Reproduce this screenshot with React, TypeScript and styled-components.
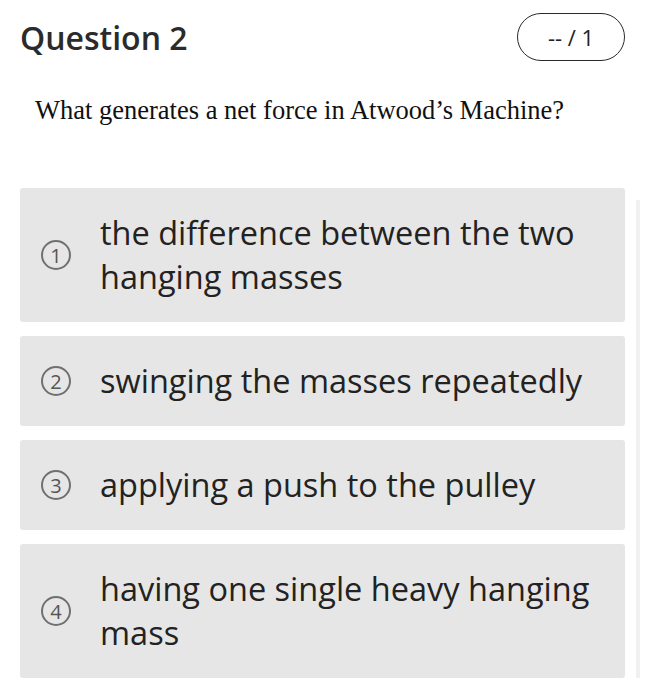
import React from "react";
import styled, { createGlobalStyle } from "styled-components";

const options = [
  "the difference between the two hanging masses",
  "swinging the masses repeatedly",
  "applying a push to the pulley",
  "having one single heavy hanging mass",
];

const GlobalStyle = createGlobalStyle`
  html, body {
    margin: 0;
    padding: 0;
    background: #ffffff;
  }
`;

export default function App() {
  return (
    <>
      <GlobalStyle />
      <Page>
        <Header>
          <Title>Question 2</Title>
          <Score>-- / 1</Score>
        </Header>
        <Prompt>What generates a net force in Atwood’s Machine?</Prompt>
        <Body>
          <OptionList>
            {options.map((text, i) => (
              <Option key={text}>
                <Badge>{i + 1}</Badge>
                <OptionText>{text}</OptionText>
              </Option>
            ))}
          </OptionList>
          <ScrollTrack />
        </Body>
      </Page>
    </>
  );
}

const Page = styled.div`
  width: 645px;
  height: 700px;
  box-sizing: border-box;
  padding: 13px 0 0 20px;
  display: flex;
  flex-direction: column;
  overflow: hidden;
`;

const Header = styled.div`
  display: flex;
  align-items: center;
  justify-content: space-between;
  width: 605px;
`;

const Title = styled.h2`
  margin: 0;
  font-family: "Open Sans", sans-serif;
  font-weight: 600;
  font-size: 32px;
  color: #2b2b2b;
`;

const Score = styled.div`
  width: 108px;
  height: 48px;
  box-sizing: border-box;
  border: 1.5px solid #2a2a2a;
  border-radius: 24px;
  display: flex;
  align-items: center;
  justify-content: center;
  font-family: "Open Sans", sans-serif;
  font-size: 22px;
  color: #222;
`;

const Prompt = styled.p`
  margin: 34px 0 0 15px;
  font-family: "Liberation Serif", "Times New Roman", serif;
  font-size: 26.5px;
  line-height: 30px;
  color: #111;
`;

const Body = styled.div`
  display: flex;
  gap: 11px;
  margin-top: 63px;
`;

const OptionList = styled.div`
  width: 605px;
  display: flex;
  flex-direction: column;
  gap: 14px;
`;

const Option = styled.div`
  display: flex;
  align-items: center;
  gap: 29px;
  padding: 23px 20px 23px 21px;
  background: #e6e6e6;
  border-radius: 3px;
`;

const Badge = styled.span`
  flex: none;
  width: 30px;
  height: 30px;
  box-sizing: border-box;
  border: 2px solid #707070;
  border-radius: 50%;
  display: flex;
  align-items: center;
  justify-content: center;
  font-family: "Open Sans", sans-serif;
  font-size: 20px;
  color: #555;
`;

const OptionText = styled.span`
  font-family: "Open Sans", sans-serif;
  font-size: 32.5px;
  line-height: 44px;
  color: #222;
`;

const ScrollTrack = styled.div`
  width: 4px;
  margin-top: 12px;
  background: #f1f1f1;
`;
